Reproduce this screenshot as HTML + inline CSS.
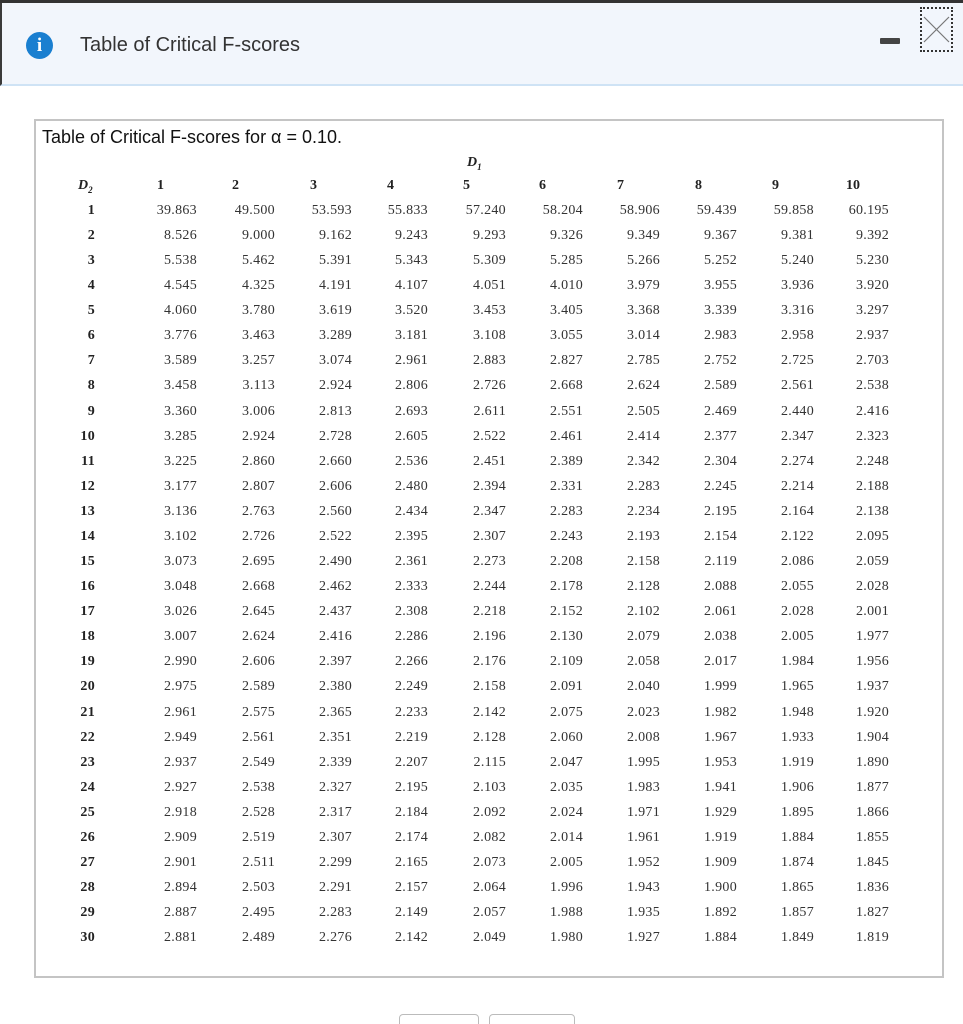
<!DOCTYPE html>
<html><head><meta charset="utf-8">
<style>
html,body{margin:0;padding:0;background:#fff;width:963px;height:1024px;overflow:hidden;position:relative;font-family:"Liberation Sans",sans-serif}
.top{position:absolute;left:0;top:0;width:963px;height:3px;background:#333}
.hdr{position:absolute;left:0;top:3px;width:963px;height:83px;background:#f2f6fc;border-left:2px solid #3a3a3a;box-sizing:border-box;border-bottom:2px solid #cfe3f5}
.icon{position:absolute;left:26px;top:32px;width:27px;height:27px;border-radius:50%;background:#1a7fd0;color:#fff;font:bold 19px "Liberation Serif",serif;text-align:center;line-height:27px}
.title{position:absolute;left:80px;top:34px;font-size:20px;color:#333}
.min{position:absolute;left:880px;top:38px;width:20px;height:6px;background:#444;border-radius:1px}
.x{position:absolute;left:920px;top:7px;width:33px;height:45px;border:2px dotted #333;box-sizing:border-box}
.box{position:absolute;left:34px;top:119px;width:910px;height:859px;border:2px solid #c4c4c4;box-sizing:border-box}
.cap{position:absolute;left:42px;top:127px;font-size:18px;color:#111}
.r{position:absolute;left:0;width:963px;height:18px;font:14px/18px "Liberation Serif",serif;color:#333;letter-spacing:0.3px}
.r span{position:absolute;width:70px;text-align:right}
.r span:nth-child(1){left:25px;font-weight:bold;color:#222}
.r span:nth-child(2){left:127px}.r span:nth-child(3){left:205px}.r span:nth-child(4){left:282px}
.r span:nth-child(5){left:358px}.r span:nth-child(6){left:436px}.r span:nth-child(7){left:513px}
.r span:nth-child(8){left:590px}.r span:nth-child(9){left:667px}.r span:nth-child(10){left:744px}
.r span:nth-child(11){left:819px}
.h{position:absolute;top:177px;font:bold 14px/18px "Liberation Serif",serif;color:#222}
.btn{position:absolute;top:1014px;height:20px;border:1px solid #bbb;border-radius:4px;background:#fff}
</style></head><body>
<div class="top"></div>
<div class="hdr"></div>
<div class="icon">i</div>
<div class="title">Table of Critical F-scores</div>
<div class="min"></div>
<div class="x"><svg width="29" height="41" viewBox="0 0 29 41" style="position:absolute;left:0;top:0"><path d="M2 8 L27 33 M27 8 L2 33" stroke="#777" stroke-width="1.2"/></svg></div>
<div class="box"></div>
<div class="cap">Table of Critical F-scores for α = 0.10.</div>
<div class="h" style="left:467px;top:154px;font-style:italic">D<sub style="font-size:9px">1</sub></div>
<div class="h" style="left:78px;font-style:italic">D<sub style="font-size:9px">2</sub></div>
<div class="h" style="left:157px">1</div><div class="h" style="left:232px">2</div><div class="h" style="left:310px">3</div><div class="h" style="left:387px">4</div><div class="h" style="left:463px">5</div><div class="h" style="left:539px">6</div><div class="h" style="left:617px">7</div><div class="h" style="left:695px">8</div><div class="h" style="left:772px">9</div><div class="h" style="left:846px">10</div>
<div class="r" style="top:202px"><span>1</span><span>39.863</span><span>49.500</span><span>53.593</span><span>55.833</span><span>57.240</span><span>58.204</span><span>58.906</span><span>59.439</span><span>59.858</span><span>60.195</span></div>
<div class="r" style="top:227px"><span>2</span><span>8.526</span><span>9.000</span><span>9.162</span><span>9.243</span><span>9.293</span><span>9.326</span><span>9.349</span><span>9.367</span><span>9.381</span><span>9.392</span></div>
<div class="r" style="top:252px"><span>3</span><span>5.538</span><span>5.462</span><span>5.391</span><span>5.343</span><span>5.309</span><span>5.285</span><span>5.266</span><span>5.252</span><span>5.240</span><span>5.230</span></div>
<div class="r" style="top:277px"><span>4</span><span>4.545</span><span>4.325</span><span>4.191</span><span>4.107</span><span>4.051</span><span>4.010</span><span>3.979</span><span>3.955</span><span>3.936</span><span>3.920</span></div>
<div class="r" style="top:302px"><span>5</span><span>4.060</span><span>3.780</span><span>3.619</span><span>3.520</span><span>3.453</span><span>3.405</span><span>3.368</span><span>3.339</span><span>3.316</span><span>3.297</span></div>
<div class="r" style="top:327px"><span>6</span><span>3.776</span><span>3.463</span><span>3.289</span><span>3.181</span><span>3.108</span><span>3.055</span><span>3.014</span><span>2.983</span><span>2.958</span><span>2.937</span></div>
<div class="r" style="top:352px"><span>7</span><span>3.589</span><span>3.257</span><span>3.074</span><span>2.961</span><span>2.883</span><span>2.827</span><span>2.785</span><span>2.752</span><span>2.725</span><span>2.703</span></div>
<div class="r" style="top:377px"><span>8</span><span>3.458</span><span>3.113</span><span>2.924</span><span>2.806</span><span>2.726</span><span>2.668</span><span>2.624</span><span>2.589</span><span>2.561</span><span>2.538</span></div>
<div class="r" style="top:403px"><span>9</span><span>3.360</span><span>3.006</span><span>2.813</span><span>2.693</span><span>2.611</span><span>2.551</span><span>2.505</span><span>2.469</span><span>2.440</span><span>2.416</span></div>
<div class="r" style="top:428px"><span>10</span><span>3.285</span><span>2.924</span><span>2.728</span><span>2.605</span><span>2.522</span><span>2.461</span><span>2.414</span><span>2.377</span><span>2.347</span><span>2.323</span></div>
<div class="r" style="top:453px"><span>11</span><span>3.225</span><span>2.860</span><span>2.660</span><span>2.536</span><span>2.451</span><span>2.389</span><span>2.342</span><span>2.304</span><span>2.274</span><span>2.248</span></div>
<div class="r" style="top:478px"><span>12</span><span>3.177</span><span>2.807</span><span>2.606</span><span>2.480</span><span>2.394</span><span>2.331</span><span>2.283</span><span>2.245</span><span>2.214</span><span>2.188</span></div>
<div class="r" style="top:503px"><span>13</span><span>3.136</span><span>2.763</span><span>2.560</span><span>2.434</span><span>2.347</span><span>2.283</span><span>2.234</span><span>2.195</span><span>2.164</span><span>2.138</span></div>
<div class="r" style="top:528px"><span>14</span><span>3.102</span><span>2.726</span><span>2.522</span><span>2.395</span><span>2.307</span><span>2.243</span><span>2.193</span><span>2.154</span><span>2.122</span><span>2.095</span></div>
<div class="r" style="top:553px"><span>15</span><span>3.073</span><span>2.695</span><span>2.490</span><span>2.361</span><span>2.273</span><span>2.208</span><span>2.158</span><span>2.119</span><span>2.086</span><span>2.059</span></div>
<div class="r" style="top:578px"><span>16</span><span>3.048</span><span>2.668</span><span>2.462</span><span>2.333</span><span>2.244</span><span>2.178</span><span>2.128</span><span>2.088</span><span>2.055</span><span>2.028</span></div>
<div class="r" style="top:603px"><span>17</span><span>3.026</span><span>2.645</span><span>2.437</span><span>2.308</span><span>2.218</span><span>2.152</span><span>2.102</span><span>2.061</span><span>2.028</span><span>2.001</span></div>
<div class="r" style="top:628px"><span>18</span><span>3.007</span><span>2.624</span><span>2.416</span><span>2.286</span><span>2.196</span><span>2.130</span><span>2.079</span><span>2.038</span><span>2.005</span><span>1.977</span></div>
<div class="r" style="top:653px"><span>19</span><span>2.990</span><span>2.606</span><span>2.397</span><span>2.266</span><span>2.176</span><span>2.109</span><span>2.058</span><span>2.017</span><span>1.984</span><span>1.956</span></div>
<div class="r" style="top:678px"><span>20</span><span>2.975</span><span>2.589</span><span>2.380</span><span>2.249</span><span>2.158</span><span>2.091</span><span>2.040</span><span>1.999</span><span>1.965</span><span>1.937</span></div>
<div class="r" style="top:704px"><span>21</span><span>2.961</span><span>2.575</span><span>2.365</span><span>2.233</span><span>2.142</span><span>2.075</span><span>2.023</span><span>1.982</span><span>1.948</span><span>1.920</span></div>
<div class="r" style="top:729px"><span>22</span><span>2.949</span><span>2.561</span><span>2.351</span><span>2.219</span><span>2.128</span><span>2.060</span><span>2.008</span><span>1.967</span><span>1.933</span><span>1.904</span></div>
<div class="r" style="top:754px"><span>23</span><span>2.937</span><span>2.549</span><span>2.339</span><span>2.207</span><span>2.115</span><span>2.047</span><span>1.995</span><span>1.953</span><span>1.919</span><span>1.890</span></div>
<div class="r" style="top:779px"><span>24</span><span>2.927</span><span>2.538</span><span>2.327</span><span>2.195</span><span>2.103</span><span>2.035</span><span>1.983</span><span>1.941</span><span>1.906</span><span>1.877</span></div>
<div class="r" style="top:804px"><span>25</span><span>2.918</span><span>2.528</span><span>2.317</span><span>2.184</span><span>2.092</span><span>2.024</span><span>1.971</span><span>1.929</span><span>1.895</span><span>1.866</span></div>
<div class="r" style="top:829px"><span>26</span><span>2.909</span><span>2.519</span><span>2.307</span><span>2.174</span><span>2.082</span><span>2.014</span><span>1.961</span><span>1.919</span><span>1.884</span><span>1.855</span></div>
<div class="r" style="top:854px"><span>27</span><span>2.901</span><span>2.511</span><span>2.299</span><span>2.165</span><span>2.073</span><span>2.005</span><span>1.952</span><span>1.909</span><span>1.874</span><span>1.845</span></div>
<div class="r" style="top:879px"><span>28</span><span>2.894</span><span>2.503</span><span>2.291</span><span>2.157</span><span>2.064</span><span>1.996</span><span>1.943</span><span>1.900</span><span>1.865</span><span>1.836</span></div>
<div class="r" style="top:904px"><span>29</span><span>2.887</span><span>2.495</span><span>2.283</span><span>2.149</span><span>2.057</span><span>1.988</span><span>1.935</span><span>1.892</span><span>1.857</span><span>1.827</span></div>
<div class="r" style="top:929px"><span>30</span><span>2.881</span><span>2.489</span><span>2.276</span><span>2.142</span><span>2.049</span><span>1.980</span><span>1.927</span><span>1.884</span><span>1.849</span><span>1.819</span></div>
<div class="btn" style="left:399px;width:78px"></div>
<div class="btn" style="left:489px;width:84px"></div>
</body></html>
